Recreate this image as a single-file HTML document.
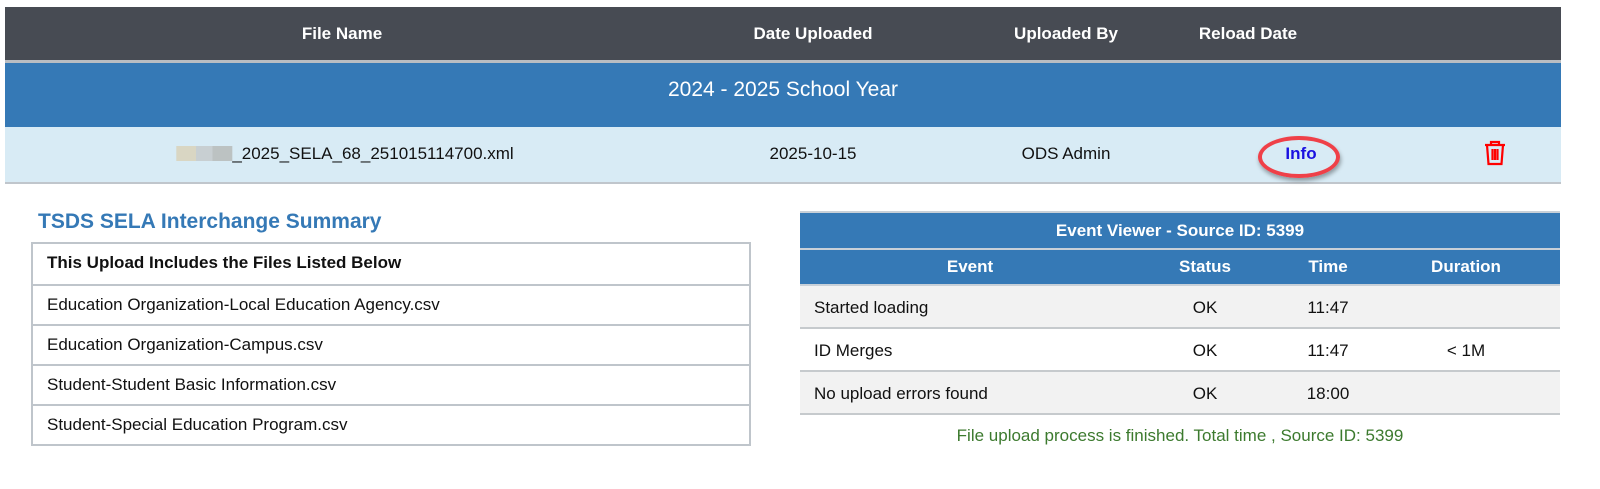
<!DOCTYPE html>
<html><head><style>
*{margin:0;padding:0;box-sizing:border-box}
body{width:1600px;height:489px;background:#fff;font-family:"Liberation Sans",Arial,sans-serif;font-size:17px;color:#111;position:relative;overflow:hidden}
.a{position:absolute}
.hdr{left:5px;top:7px;width:1556px;height:53px;background:#474b53;color:#fff;font-weight:bold}
.hdr span,.row span{position:absolute;top:0;transform:translateX(-50%);white-space:nowrap}
.hdr span{line-height:53px}
.sep{left:5px;top:60px;width:1556px;height:3px;background:#b9bdc2}
.yr{left:5px;top:63px;width:1556px;height:64px;background:#3579b6;color:#fff;font-size:21px;text-align:center;line-height:54px}
.row{left:5px;top:127px;width:1556px;height:57px;background:#d8ebf5;border-bottom:2px solid #c0c6cc}
.row span{line-height:53px}
.title{left:38px;top:210px;color:#3579b6;font-weight:bold;font-size:21px}
.lt{left:31px;top:242px;width:720px;border:2px solid #bfc5cb}
.lt div{height:40px;line-height:38px;padding-left:14px;border-top:2px solid #bfc5cb}
.lt div:first-child{border-top:none;font-weight:bold;height:40px}
.rt{left:800px;top:211px;width:760px}
.rt .t{background:#3579b6;color:#fff;font-weight:bold;text-align:center;height:37px;line-height:36px;border-top:2px solid #c8d0d8}
.rt .h{background:#3579b6;color:#fff;font-weight:bold;height:38px;border-top:2px solid #c8d0d8;border-bottom:2px solid #c8d0d8;position:relative}
.rt .r{height:43px;position:relative;border-bottom:2px solid #c6cacd}
.c{position:absolute;top:0;line-height:40px;transform:translateX(-50%);white-space:nowrap}
.l{position:absolute;left:14px;top:0;line-height:44px}
</style></head><body>
<div class="a hdr"><span style="left:337px">File Name</span><span style="left:808px">Date Uploaded</span><span style="left:1061px">Uploaded By</span><span style="left:1243px">Reload Date</span></div>
<div class="a sep"></div>
<div class="a yr">2024 - 2025 School Year</div>
<div class="a row">
<span style="left:340px"><i style="display:inline-block;width:56px;height:15px;background:linear-gradient(90deg,#d9d6c3 0,#d9d6c3 35%,#c8cfd2 35%,#c8cfd2 65%,#bcc2c2 65%);vertical-align:-2px"></i>_2025_SELA_68_251015114700.xml</span>
<span style="left:808px">2025-10-15</span>
<span style="left:1061px">ODS Admin</span>
<span style="left:1296px;color:#1a10e0;font-weight:bold">Info</span>
<div class="a" style="left:1253px;top:9px;width:82px;height:42px;border:4px solid #ef4048;border-radius:50%;box-shadow:1px 3px 4px rgba(0,0,0,.35)"></div>
<svg class="a" style="left:1478px;top:13px" width="24" height="26" viewBox="0 0 24 26" fill="none" stroke="#f00" stroke-width="2.2"><path d="M2 5h20M8 5V2h8v3M4 5l1.5 19h13L20 5M9.5 9v11M12 9v11M14.5 9v11"/></svg>
</div>
<div class="a title">TSDS SELA Interchange Summary</div>
<div class="a lt">
<div>This Upload Includes the Files Listed Below</div>
<div>Education Organization-Local Education Agency.csv</div>
<div>Education Organization-Campus.csv</div>
<div>Student-Student Basic Information.csv</div>
<div>Student-Special Education Program.csv</div>
</div>
<div class="a rt">
<div class="t">Event Viewer - Source ID: 5399</div>
<div class="h"><span class="c" style="left:170px;line-height:34px">Event</span><span class="c" style="left:405px;line-height:34px">Status</span><span class="c" style="left:528px;line-height:34px">Time</span><span class="c" style="left:666px;line-height:34px">Duration</span></div>
<div class="r" style="background:#f2f2f2"><span class="l">Started loading</span><span class="c" style="left:405px;line-height:44px">OK</span><span class="c" style="left:528px;line-height:44px">11:47</span></div>
<div class="r"><span class="l">ID Merges</span><span class="c" style="left:405px;line-height:44px">OK</span><span class="c" style="left:528px;line-height:44px">11:47</span><span class="c" style="left:666px;line-height:44px">&lt; 1M</span></div>
<div class="r" style="background:#f2f2f2"><span class="l">No upload errors found</span><span class="c" style="left:405px;line-height:44px">OK</span><span class="c" style="left:528px;line-height:44px">18:00</span></div>
<div style="text-align:center;color:#3c7a2e;margin-top:11px">File upload process is finished. Total time , Source ID: 5399</div>
</div>
</body></html>
